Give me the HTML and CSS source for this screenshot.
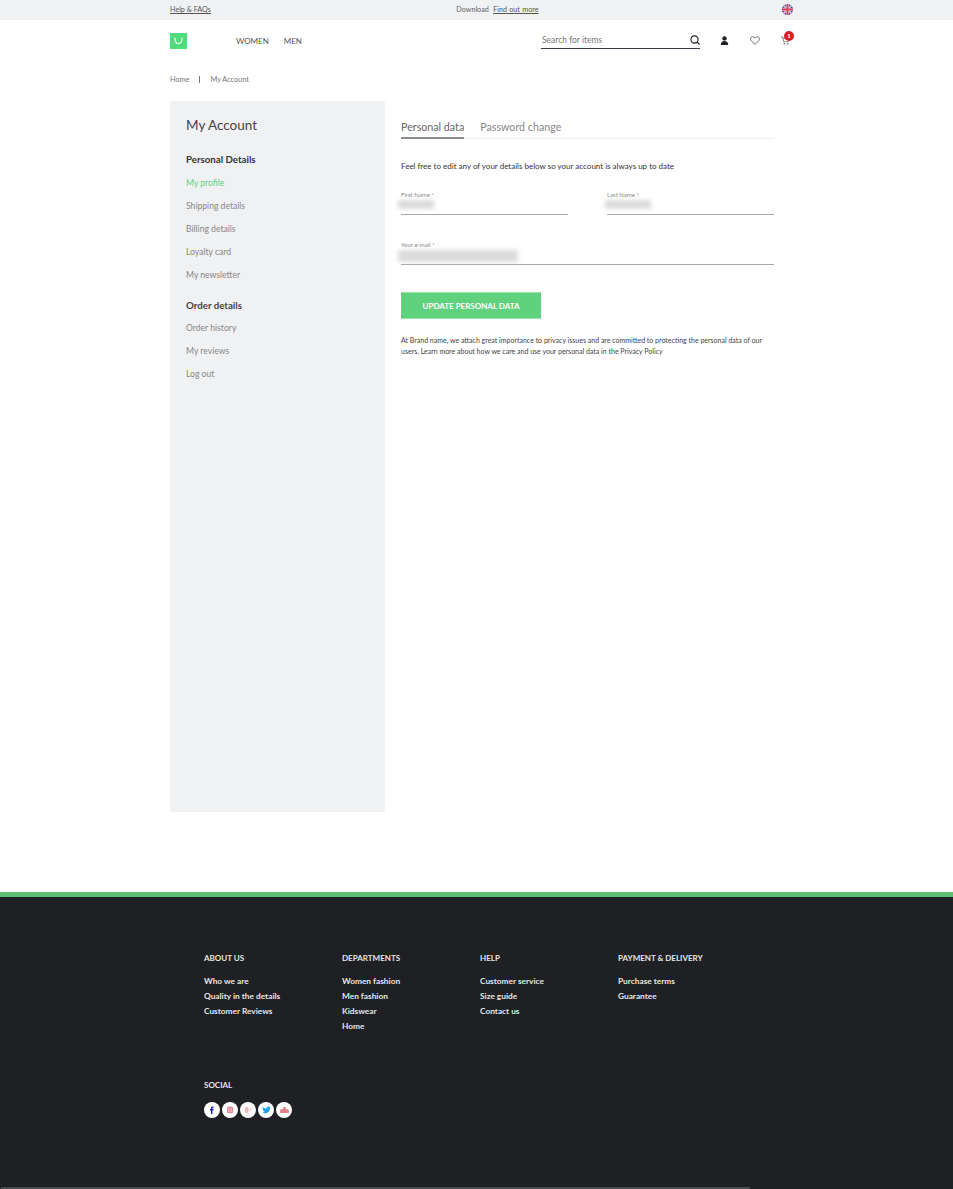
FILE: index.html
```html
<!DOCTYPE html>
<html lang="en">
<head>
    <meta charset="UTF-8">
    <meta name="viewport" content="width=device-width, initial-scale=1.0">
    <title>My Account</title>
    <link rel="stylesheet" href="styles.css">
</head>
<body>

<!-- Top bar -->
<div class="topbar">
    <div class="wrap topbar-inner">
        <a href="#" class="topbar-link">Help &amp; FAQs</a>
        <div class="topbar-mid">Download <a href="#" class="topbar-link">Find out more</a></div>
        <svg class="flag" width="11" height="11" viewBox="0 0 12 12">
            <circle cx="6" cy="6" r="6" fill="#3f55a8"/>
            <path d="M1.5 1.5l9 9M10.5 1.5l-9 9" stroke="#d9c6d6" stroke-width="1.600"/>
            <path d="M6 0v12M0 6h12" stroke="#e6dfe6" stroke-width="3"/>
            <path d="M6 0v12M0 6h12" stroke="#d8405a" stroke-width="2"/>
        </svg>
    </div>
</div>

<!-- Header -->
<header class="header">
    <div class="wrap header-inner">
        <div class="logo">
            <svg width="17" height="16" viewBox="0 0 17 16"><path d="M5 5c.1 3.800 1.600 5.700 3.500 5.700s3.400-1.900 3.500-5.700" fill="none" stroke="#fff" stroke-width="1.100" stroke-linecap="round"/></svg>
        </div>
        <nav class="nav">
            <a href="#">WOMEN</a>
            <a href="#">MEN</a>
        </nav>
        <div class="search">
            <span>Search for items</span>
            <svg width="10" height="10" viewBox="0 0 10 10"><circle cx="4.500" cy="4.500" r="3.600" fill="none" stroke="#1d1f24" stroke-width="1.100"/><path d="M7.200 7.200l2.300 2.300" stroke="#1d1f24" stroke-width="1.200"/></svg>
        </div>
        <div class="icons">
            <svg width="9" height="9" viewBox="0 0 9 9"><circle cx="4.500" cy="2.400" r="2.200" fill="#1d1f24"/><path d="M.8 9c0-2.800 1.500-4 3.700-4s3.700 1.200 3.700 4z" fill="#1d1f24"/></svg>
            <svg width="10" height="9" viewBox="0 0 10 9"><path d="M5 8.300C2.500 6.300.6 4.800.6 2.900.6 1.600 1.600.7 2.700.7c1 0 1.800.5 2.300 1.400C5.500 1.200 6.300.7 7.300.7c1.100 0 2.100.9 2.100 2.200 0 1.900-1.900 3.400-4.400 5.400z" fill="none" stroke="#555" stroke-width=".8"/></svg>
            <div class="cart">
                <svg width="9" height="9" viewBox="0 0 9 9"><path d="M0 .8h1.500l1.200 5h4.600l1-3.500H2" fill="none" stroke="#666" stroke-width=".8"/><circle cx="3.200" cy="7.800" r=".8" fill="#666"/><circle cx="6.800" cy="7.800" r=".8" fill="#666"/></svg>
                <span class="badge">1</span>
            </div>
        </div>
    </div>
</header>

<!-- Breadcrumb -->
<div class="wrap crumbs">
    <a href="#">Home</a>
    <span class="sep"></span>
    <a href="#">My Account</a>
</div>

<!-- Content -->
<div class="wrap content">
    <aside class="sidebar">
        <h2>My Account</h2>
        <h3>Personal Details</h3>
        <ul>
            <li class="active">My profile</li>
            <li>Shipping details</li>
            <li>Billing details</li>
            <li>Loyalty card</li>
            <li>My newsletter</li>
        </ul>
        <h3 class="second">Order details</h3>
        <ul>
            <li>Order history</li>
            <li>My reviews</li>
            <li>Log out</li>
        </ul>
    </aside>

    <main class="main">
        <div class="tabs">
            <a href="#" class="tab tab-active">Personal data</a>
            <a href="#" class="tab">Password change</a>
        </div>
        <p class="intro">Feel free to edit any of your details below so your account is always up to date</p>

        <div class="row">
            <div class="field">
                <label>First Name *</label>
                <div class="value"><div class="blur blur-first"></div></div>
            </div>
            <div class="field">
                <label>Last Name *</label>
                <div class="value"><div class="blur blur-last"></div></div>
            </div>
        </div>
        <div class="field field-mail">
            <label>Your e-mail *</label>
            <div class="value"><div class="blur blur-mail"></div></div>
        </div>

        <button class="update" type="button">UPDATE PERSONAL DATA</button>
        <p class="note">At Brand name, we attach great importance to privacy issues and are committed to protecting the personal data of our users. Learn more about how we care and use your personal data in the Privacy Policy</p>
    </main>
</div>

<!-- Footer -->
<footer class="footer">
    <div class="footer-cols">
        <div class="col">
            <h4>ABOUT US</h4>
            <a href="#">Who we are</a>
            <a href="#">Quality in the details</a>
            <a href="#">Customer Reviews</a>
        </div>
        <div class="col">
            <h4>DEPARTMENTS</h4>
            <a href="#">Women fashion</a>
            <a href="#">Men fashion</a>
            <a href="#">Kidswear</a>
            <a href="#">Home</a>
        </div>
        <div class="col">
            <h4>HELP</h4>
            <a href="#">Customer service</a>
            <a href="#">Size guide</a>
            <a href="#">Contact us</a>
        </div>
        <div class="col">
            <h4>PAYMENT &amp; DELIVERY</h4>
            <a href="#">Purchase terms</a>
            <a href="#">Guarantee</a>
        </div>
    </div>
    <div class="social">
        <h4>SOCIAL</h4>
        <div class="social-icons">
            <span><svg width="8" height="8" viewBox="0 0 8 8"><path d="M3 8V4.400H2V3.100h1V2.200C3 1 3.600.4 4.700.4h.9v1.300H5c-.4 0-.6.2-.6.6v.8h1.200L5.400 4.400h-1V8z" fill="#1a1ad0"/></svg></span>
            <span><svg width="8" height="8" viewBox="0 0 8 8"><rect x="1" y=".8" width="6" height="6.400" rx="1" fill="#e58a94"/><path d="M2.500 2v4M4 2v4M5.500 2v4" stroke="#f6d5d8" stroke-width=".5"/></svg></span>
            <span><svg width="8" height="8" viewBox="0 0 8 8"><rect x="1" y="1" width="3.500" height="6" rx="1" fill="#f2b8bb"/><path d="M5.500 2.500h1.500v3H5.500z" fill="#f6cfd1"/></svg></span>
            <span><svg width="9" height="8" viewBox="0 0 9 8"><path d="M8.800 1.300c-.3.100-.7.200-1 .3.400-.2.600-.6.800-1-.3.200-.7.300-1.100.4C6.100.2 4.300.9 4.500 2.600 3 2.500 1.700 1.800.8.700.3 1.500.6 2.600 1.300 3c-.3 0-.5-.1-.8-.2 0 .8.600 1.500 1.400 1.700-.2.100-.5.100-.8 0 .2.700.9 1.100 1.600 1.200C2 6.300 1.100 6.600.2 6.500 3.600 8.500 8 6.500 7.900 2.100c.3-.2.600-.5.900-.8z" fill="#1da1e8"/></svg></span>
            <span><svg width="9" height="8" viewBox="0 0 9 8"><path d="M3.200 1h2.600v2.300h2.200a.8.800 0 0 1 .8.800V7H.2V4.100a.8.800 0 0 1 .8-.8h2.200z" fill="#e8808a"/></svg></span>
        </div>
    </div>
    <div class="scrollbar"></div>
</footer>

</body>
</html>
```

FILE: styles.css
```css
* {
    box-sizing: border-box;
}
body {
    margin: 0;
    font-family: Lato, "Open Sans", Arial, sans-serif;
    background: #fff;
    color: #333;
}
a {
    color: inherit;
    text-decoration: none;
}
.wrap {
    width: 620px;
    margin-left: 170px;
}
.topbar {
    height: 20px;
    background: #f0f1f3;
}
.topbar-inner {
    display: flex;
    align-items: center;
    justify-content: space-between;
    height: 19px;
    font-size: 7.200px;
    color: #666;
}
.topbar-link {
    text-decoration: underline;
    color: #555;
}
.topbar-mid {
    margin-left: 2px;
    word-spacing: 0.5px;
}
.topbar-mid .topbar-link {
    margin-left: 2px;
}
.flag {
    margin-right: -3px;
}
.header-inner {
    display: flex;
    align-items: center;
    height: 41px;
}
.logo {
    width: 17px;
    height: 16px;
    background: #4fdc7b;
}
.logo svg {
    display: block;
}
.nav {
    display: flex;
    gap: 15px;
    margin-left: 49px;
    font-size: 8px;
    color: #555;
}
.search {
    display: flex;
    align-items: center;
    justify-content: space-between;
    width: 159px;
    height: 16px;
    margin-left: auto;
    margin-right: -1px;
    padding: 0 0 1px 1px;
    border-bottom: 1px solid #3b3c47;
    font-size: 8.500px;
    color: #777;
}
.icons {
    display: flex;
    align-items: center;
    gap: 21px;
    margin-left: 21px;
}
.icons svg {
    display: block;
}
.cart {
    position: relative;
}
.badge {
    position: absolute;
    top: -5px;
    left: 3px;
    width: 10px;
    height: 10px;
    border-radius: 50%;
    background: #d81f26;
    color: #fff;
    font-size: 6px;
    font-weight: 700;
    line-height: 10px;
    text-align: center;
}
.crumbs {
    display: flex;
    align-items: center;
    height: 11px;
    margin-top: 13px;
    font-size: 7.300px;
    color: #777;
}
.sep {
    width: 1px;
    height: 7px;
    background: #777;
    margin: 0 10px;
}
.content {
    display: flex;
    margin-top: 16px;
    width: 604px;
}
.sidebar {
    width: 215px;
    height: 711px;
    flex-shrink: 0;
    padding: 16px 16px 0;
    background: #f0f1f3;
}
.sidebar h2 {
    margin: 0;
    font-size: 13.500px;
    line-height: 17px;
    font-weight: 400;
    color: #444;
}
.sidebar h3 {
    margin: 19px 0 0;
    font-size: 9.700px;
    line-height: 12px;
    font-weight: 700;
    color: #333;
}
.sidebar h3.second {
    margin: 19px 0 -1px;
    color: #444;
}
.sidebar ul {
    list-style: none;
    margin: 0;
    padding: 0;
}
.sidebar li {
    height: 23px;
    padding-top: 12px;
    font-size: 8.600px;
    line-height: 12px;
    color: #888;
}
.sidebar li.active {
    color: #62d27e;
}
.main {
    flex: 1;
    margin-left: 16px;
}
.tabs {
    display: flex;
    gap: 16px;
    height: 38px;
    padding-top: 18px;
    border-bottom: 1px solid #f0f1f3;
    font-size: 10.700px;
    color: #888;
}
.tab {
    height: 20px;
    line-height: 16px;
}
.tab-active {
    border-bottom: 2px solid #8b8b8b;
    color: #666;
}
.intro {
    margin: 21px 0 0;
    font-size: 8px;
    line-height: 12px;
    color: #333;
}
.row {
    display: flex;
    justify-content: space-between;
    margin-top: 19px;
}
.row .field {
    width: 167px;
}
.field label {
    display: block;
    font-size: 6px;
    line-height: 8px;
    color: #888;
}
.value {
    position: relative;
    height: 16px;
    border-bottom: 1px solid #a8a8ac;
}
.field-mail {
    margin-top: 26px;
}
.blur {
    position: absolute;
    top: 1px;
    left: -3px;
    height: 9px;
    background: #dcdcdc;
    filter: blur(2px);
}
.blur-first {
    width: 36px;
}
.blur-last {
    width: 46px;
    left: -2px;
}
.blur-mail {
    width: 120px;
    height: 12px;
}
.update {
    display: block;
    width: 140px;
    height: 27px;
    margin-top: 27px;
    padding: 0;
    border: none;
    border-top: 1px solid #96e2a9;
    border-bottom: 1px solid #96e2a9;
    background: #60d17d;
    color: #fff;
    font-family: inherit;
    font-size: 8px;
    font-weight: 700;
}
.note {
    margin: 16px 0 0;
    font-size: 7px;
    line-height: 11px;
    color: #444;
}
.footer {
    position: relative;
    height: 297px;
    margin-top: 80px;
    padding: 55px 0 0 204px;
    border-top: 5px solid #5fbf76;
    background: #1e2024;
    color: #e6e6e6;
}
.footer-cols {
    display: flex;
    height: 127px;
}
.col {
    width: 138px;
    font-size: 8.300px;
    font-weight: 700;
}
.col a {
    display: block;
    line-height: 15px;
}
.footer h4 {
    margin: 0;
    font-size: 8px;
    line-height: 12px;
    font-weight: 700;
}
.col h4 {
    margin-bottom: 10px;
}
.social-icons {
    display: flex;
    gap: 2px;
    margin-top: 11px;
}
.social-icons span {
    display: flex;
    align-items: center;
    justify-content: center;
    width: 16px;
    height: 16px;
    border-radius: 50%;
    background: #fff;
}
.scrollbar {
    position: absolute;
    left: 1px;
    bottom: 0;
    width: 749px;
    height: 2px;
    background: #4a4b4f;
}
```
